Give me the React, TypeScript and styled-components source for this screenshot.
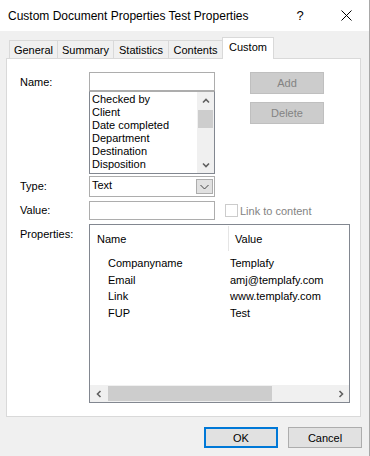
import React from "react";
import styled, { createGlobalStyle } from "styled-components";

const Global = createGlobalStyle`
  html, body { margin: 0; padding: 0; background: #f0f0f0; }
  * { box-sizing: border-box; }
`;

const FONT = `"Liberation Sans", Arial, sans-serif`;

const Window = styled.div`
  width: 370px;
  height: 456px;
  background: #f0f0f0;
  font-family: ${FONT};
  font-size: 11px;
  color: #000;
  border-right: 1px solid #a8a8a8;
  overflow: hidden;
`;

const TitleBar = styled.div`
  height: 31px;
  background: #fff;
  display: flex;
  align-items: center;
  padding-left: 8px;
`;

const Title = styled.div`
  font-size: 12px;
  flex: 1;
  white-space: nowrap;
`;

const CaptionButton = styled.div`
  width: 46px;
  height: 31px;
  display: flex;
  align-items: center;
  justify-content: center;
  font-size: 13px;
`;

const Content = styled.div`
  padding: 6px 0 0 6px;
`;

const TabRow = styled.div`
  display: flex;
  align-items: flex-end;
  height: 21px;
  padding-left: 3px;
`;

const Tab = styled.div<{ $w: number; $active?: boolean }>`
  width: ${(p) => p.$w}px;
  height: ${(p) => (p.$active ? 22 : 18)}px;
  margin-left: -1px;
  border: 1px solid #d9d9d9;
  border-bottom: none;
  background: ${(p) => (p.$active ? "#fff" : "#f0f0f0")};
  display: flex;
  align-items: ${(p) => (p.$active ? "flex-start" : "center")};
  padding-top: ${(p) => (p.$active ? 3 : 0)}px;
  justify-content: center;
  position: relative;
  z-index: ${(p) => (p.$active ? 1 : 0)};
  margin-bottom: ${(p) => (p.$active ? -1 : 0)}px;
  &:first-child { margin-left: 0; }
`;

const Panel = styled.div`
  width: 355px;
  height: 359px;
  background: #fff;
  border: 1px solid #d9d9d9;
  padding: 13px 0 13px 13px;
  display: flex;
  flex-direction: column;
`;

const FormRow = styled.div<{ $mt?: number }>`
  display: flex;
  align-items: flex-start;
  margin-top: ${(p) => p.$mt ?? 0}px;
`;

const Label = styled.div<{ $h: number }>`
  width: 69px;
  height: ${(p) => p.$h}px;
  line-height: ${(p) => p.$h}px;
  white-space: nowrap;
`;

const FieldColumn = styled.div`
  width: 126px;
  display: flex;
  flex-direction: column;
`;

const TextBox = styled.div`
  width: 126px;
  height: 19px;
  border: 1px solid #adadad;
  background: #fff;
`;

const ListBox = styled.div`
  width: 126px;
  height: 83px;
  border: 1px solid #828790;
  border-top-color: #adadad;
  background: #fff;
  display: flex;
`;

const ListItems = styled.div`
  flex: 1;
  padding: 1px 0 0 2px;
  overflow: hidden;
`;

const ListItem = styled.div`
  height: 13px;
  line-height: 13px;
  white-space: nowrap;
`;

const VScroll = styled.div`
  width: 17px;
  background: #f0f0f0;
  display: flex;
  flex-direction: column;
`;

const ScrollArrow = styled.div<{ $size?: number }>`
  width: 17px;
  height: 17px;
  display: flex;
  align-items: center;
  justify-content: center;
  flex-shrink: 0;
`;

const VThumb = styled.div`
  height: 18px;
  margin: 1px 1px 0 1px;
  background: #cdcdcd;
`;

const Spacer = styled.div`
  flex: 1;
`;

const ButtonColumn = styled.div`
  display: flex;
  flex-direction: column;
  gap: 8px;
  margin-left: 35px;
`;

const DisabledButton = styled.div`
  width: 74px;
  height: 22px;
  background: #cccccc;
  border: 1px solid #bfbfbf;
  color: #838383;
  display: flex;
  align-items: center;
  justify-content: center;
`;

const Select = styled.div`
  width: 126px;
  height: 21px;
  border: 1px solid #adadad;
  background: #fff;
  display: flex;
  align-items: center;
  padding: 0 1px 0 2px;
`;

const SelectText = styled.div`
  flex: 1;
  line-height: 15px;
  align-self: flex-start;
  padding-top: 1px;
`;

const DropButton = styled.div`
  width: 17px;
  height: 15px;
  background: #e1e1e1;
  border: 1px solid #adadad;
  display: flex;
  align-items: center;
  justify-content: center;
`;

const CheckArea = styled.div`
  display: flex;
  align-items: center;
  height: 19px;
  margin-left: 10px;
  color: #838383;
`;

const CheckBox = styled.div`
  width: 13px;
  height: 13px;
  border: 1px solid #cccccc;
  background: #fff;
  margin-right: 2px;
`;

const PropLabel = styled.div`
  width: 69px;
  padding-top: 3px;
  line-height: 14px;
`;

const PropList = styled.div`
  width: 261px;
  height: 179px;
  border: 1px solid #828790;
  display: flex;
  flex-direction: column;
  background: #fff;
`;

const HeaderRow = styled.div`
  display: flex;
  height: 26px;
  align-items: stretch;
`;

const HeaderCell = styled.div<{ $w?: number; $pl: number; $divider?: boolean }>`
  width: ${(p) => (p.$w ? `${p.$w}px` : "auto")};
  flex: ${(p) => (p.$w ? "none" : "1")};
  padding-left: ${(p) => p.$pl}px;
  display: flex;
  align-items: center;
  border-right: ${(p) => (p.$divider ? "1px solid #e5e5e5" : "none")};
  margin-top: 1px;
`;

const Rows = styled.div`
  padding-top: 4px;
`;

const DataRow = styled.div`
  display: flex;
  height: 16.67px;
  line-height: 16.67px;
`;

const Cell = styled.div<{ $w?: number; $pl: number }>`
  width: ${(p) => (p.$w ? `${p.$w}px` : "auto")};
  flex: ${(p) => (p.$w ? "none" : "1")};
  padding-left: ${(p) => p.$pl}px;
  white-space: nowrap;
`;

const HScroll = styled.div`
  height: 17px;
  background: #f0f0f0;
  display: flex;
  align-items: stretch;
`;

const HThumb = styled.div`
  width: 164px;
  margin: 1px 0;
  background: #cdcdcd;
  margin-left: 1px;
`;

const Footer = styled.div`
  display: flex;
  justify-content: flex-end;
  gap: 10px;
  padding: 10px 7px 0 0;
`;

const DialogButton = styled.div<{ $default?: boolean }>`
  width: 74px;
  height: 21px;
  background: #e1e1e1;
  border: ${(p) => (p.$default ? "2px solid #0078d7" : "1px solid #adadad")};
  display: flex;
  align-items: center;
  justify-content: center;
`;

const Chevron = ({ dir, color = "#606060" }: { dir: "up" | "down" | "left" | "right"; color?: string }) => {
  const paths: Record<string, string> = {
    up: "M1 5.5 L4 2.5 L7 5.5",
    down: "M1 2.5 L4 5.5 L7 2.5",
    left: "M5.5 1 L2.5 4 L5.5 7",
    right: "M2.5 1 L5.5 4 L2.5 7",
  };
  return (
    <svg width="8" height="8" viewBox="0 0 8 8">
      <path d={paths[dir]} fill="none" stroke={color} strokeWidth="1.6" />
    </svg>
  );
};

const tabs: { label: string; w: number; active?: boolean }[] = [
  { label: "General", w: 49 },
  { label: "Summary", w: 57 },
  { label: "Statistics", w: 56 },
  { label: "Contents", w: 55 },
  { label: "Custom", w: 52, active: true },
];

const names = ["Checked by", "Client", "Date completed", "Department", "Destination", "Disposition"];

const props = [
  ["Companyname", "Templafy"],
  ["Email", "amj@templafy.com"],
  ["Link", "www.templafy.com"],
  ["FUP", "Test"],
];

export default function App() {
  return (
    <>
      <Global />
      <Window>
        <TitleBar>
          <Title>Custom Document Properties Test Properties</Title>
          <CaptionButton>?</CaptionButton>
          <CaptionButton>
            <svg width="11" height="11" viewBox="0 0 11 11">
              <path d="M0.5 0.5 L10.5 10.5 M10.5 0.5 L0.5 10.5" stroke="#000" strokeWidth="1" fill="none" />
            </svg>
          </CaptionButton>
        </TitleBar>
        <Content>
          <TabRow>
            {tabs.map((t) => (
              <Tab key={t.label} $w={t.w} $active={t.active}>
                {t.label}
              </Tab>
            ))}
          </TabRow>
          <Panel>
            <FormRow>
              <Label $h={20}>Name:</Label>
              <FieldColumn>
                <TextBox />
                <ListBox>
                  <ListItems>
                    {names.map((n) => (
                      <ListItem key={n}>{n}</ListItem>
                    ))}
                  </ListItems>
                  <VScroll>
                    <ScrollArrow>
                      <Chevron dir="up" />
                    </ScrollArrow>
                    <VThumb />
                    <Spacer />
                    <ScrollArrow>
                      <Chevron dir="down" />
                    </ScrollArrow>
                  </VScroll>
                </ListBox>
              </FieldColumn>
              <ButtonColumn>
                <DisabledButton>Add</DisabledButton>
                <DisabledButton>Delete</DisabledButton>
              </ButtonColumn>
            </FormRow>
            <FormRow $mt={2}>
              <Label $h={21}>Type:</Label>
              <Select>
                <SelectText>Text</SelectText>
                <DropButton>
                  <svg width="9" height="6" viewBox="0 0 9 6">
                    <path d="M0.5 1 L4.5 5 L8.5 1" stroke="#444" strokeWidth="1" fill="none" />
                  </svg>
                </DropButton>
              </Select>
            </FormRow>
            <FormRow $mt={4}>
              <Label $h={19}>Value:</Label>
              <TextBox />
              <CheckArea>
                <CheckBox />
                Link to content
              </CheckArea>
            </FormRow>
            <FormRow $mt={4}>
              <PropLabel>Properties:</PropLabel>
              <PropList>
                <HeaderRow>
                  <HeaderCell $w={139} $pl={7} $divider>
                    Name
                  </HeaderCell>
                  <HeaderCell $pl={6}>Value</HeaderCell>
                </HeaderRow>
                <Rows>
                  {props.map(([k, v]) => (
                    <DataRow key={k}>
                      <Cell $w={140} $pl={18}>
                        {k}
                      </Cell>
                      <Cell $pl={0}>{v}</Cell>
                    </DataRow>
                  ))}
                </Rows>
                <Spacer />
                <HScroll>
                  <ScrollArrow>
                    <Chevron dir="left" />
                  </ScrollArrow>
                  <HThumb />
                  <Spacer />
                  <ScrollArrow>
                    <Chevron dir="right" />
                  </ScrollArrow>
                </HScroll>
              </PropList>
            </FormRow>
          </Panel>
          <Footer>
            <DialogButton $default>OK</DialogButton>
            <DialogButton>Cancel</DialogButton>
          </Footer>
        </Content>
      </Window>
    </>
  );
}
